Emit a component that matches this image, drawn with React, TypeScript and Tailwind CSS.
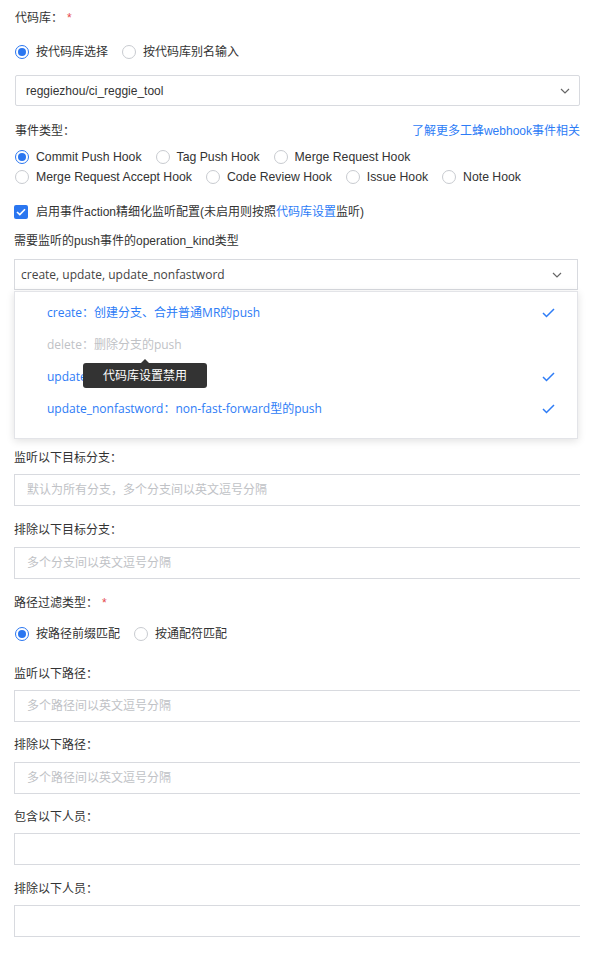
import React from 'react';

const BLUE = 'text-[#2d7cf6]';

function Label({ text, required, className = '' }: { text: string; required?: boolean; className?: string }) {
  return (
    <div className={`h-5 leading-5 text-[12px] text-[#333] ${className}`}>
      {text}
      {required && <span className="ml-[4px] text-[#e5484d]">*</span>}
    </div>
  );
}

function Radio({ label, checked, latin }: { label: string; checked?: boolean; latin?: boolean }) {
  return (
    <label className="flex items-center mr-[14px] h-5 cursor-pointer">
      <span
        className={`w-[14px] h-[14px] rounded-full border flex items-center justify-center bg-white ${
          checked ? 'border-[#2a76f0]' : 'border-[#c8cbd0]'
        }`}
      >
        {checked && <span className="w-2 h-2 rounded-full bg-[#2a76f0]" />}
      </span>
      <span className={`ml-[7px] text-[#333] whitespace-nowrap ${latin ? 'text-[12.25px]' : 'text-[12px]'}`}>{label}</span>
    </label>
  );
}

function Chevron({ className = '' }: { className?: string }) {
  return (
    <svg width="10" height="6" viewBox="0 0 10 6" className={className}>
      <path d="M1 1l4 4 4-4" fill="none" stroke="#666" strokeWidth="1.2" />
    </svg>
  );
}

function Check() {
  return (
    <svg width="13" height="10" viewBox="0 0 13 10">
      <path d="M1 5l3.5 3.5L12 1" fill="none" stroke="#2d7cf6" strokeWidth="1.5" />
    </svg>
  );
}

function TextInput({ placeholder, className = '' }: { placeholder?: string; className?: string }) {
  return (
    <input
      type="text"
      placeholder={placeholder}
      className={`block w-[566px] h-8 border border-r-0 border-[#d8dadf] px-3 text-[12px] text-[#333] placeholder:text-[#c0c2c6] outline-none ${className}`}
    />
  );
}

const kinds = [
  { key: 'create', desc: '创建分支、合并普通MR的push', checked: true },
  { key: 'delete', desc: '删除分支的push', disabled: true },
  { key: 'update', desc: '更新分支的push', checked: true },
  { key: 'update_nonfastword', desc: 'non-fast-forward型的push', checked: true },
];

export default function App() {
  return (
    <div className="w-[608px] min-h-[958px] bg-white px-[14px] pt-2 font-[family-name:'Liberation_Sans','Noto_Sans_CJK_SC',sans-serif]">
      <div className="w-[566px]">
        <Label text="代码库：" required className="ml-px" />

        <div className="flex mt-[14px] ml-px">
          <Radio label="按代码库选择" checked />
          <Radio label="按代码库别名输入" />
        </div>

        {/* repository select */}
        <div className="ml-px mt-[13px] w-[565px] h-[31px] border border-[#d8dadf] rounded-[2px] flex items-center justify-between pl-[10px] pr-[9px]">
          <span className="text-[12px] text-[#333]">reggiezhou/ci_reggie_tool</span>
          <Chevron />
        </div>

        <div className="flex items-center justify-between mt-[15px] ml-px">
          <Label text="事件类型：" />
          <a className={`text-[12px] ${BLUE} leading-5`}>了解更多工蜂webhook事件相关</a>
        </div>

        <div className="flex mt-[6px] ml-px">
          <Radio label="Commit Push Hook" checked latin />
          <Radio label="Tag Push Hook" latin />
          <Radio label="Merge Request Hook" latin />
        </div>
        <div className="flex ml-px">
          <Radio label="Merge Request Accept Hook" latin />
          <Radio label="Code Review Hook" latin />
          <Radio label="Issue Hook" latin />
          <Radio label="Note Hook" latin />
        </div>

        <div className="flex items-center mt-[15px] h-5">
          <span className="w-[14px] h-[14px] rounded-[2px] bg-[#2a76f0] flex items-center justify-center">
            <svg width="10" height="8" viewBox="0 0 10 8">
              <path d="M1 4l2.8 2.6L9 1.2" fill="none" stroke="#fff" strokeWidth="1.6" />
            </svg>
          </span>
          <span className="ml-2 text-[12px] text-[#333]">
            启用事件action精细化监听配置(未启用则按照<span className={BLUE}>代码库设置</span>监听)
          </span>
        </div>

        <Label text="需要监听的push事件的operation_kind类型" className="mt-[9px]" />

        {/* operation kind select */}
        <div className="relative mt-[8px] w-[564px]">
          <div className="h-[31px] border border-[#d8dadf] flex items-center justify-between pl-[6px] pr-[15px] bg-white">
            <span className="text-[12px] text-[#444] font-[family-name:'Open_Sans','Noto_Sans_CJK_SC',sans-serif]">
              create, update, update_nonfastword
            </span>
            <Chevron />
          </div>
          <div className="mt-px border border-[#e3e4e8] shadow-[0_2px_8px_rgba(0,0,0,0.12)] bg-white pt-[5px] pb-[13px]">
            {kinds.map(k => (
              <div key={k.key} className="h-8 flex items-center justify-between pl-[32px] pr-[22px]">
                <span
                  className={`text-[12px] font-[family-name:'Open_Sans','Noto_Sans_CJK_SC',sans-serif] ${
                    k.disabled ? 'text-[#c0c2c6]' : BLUE
                  }`}
                >
                  {k.key}：{k.desc}
                </span>
                {k.checked && <Check />}
              </div>
            ))}
          </div>

          {/* tooltip */}
          <div className="absolute left-[69px] top-[104px] h-[25px] w-[124px] rounded-[3px] bg-[#333] flex items-center pl-5 text-[12px] text-white">
            <span className="absolute -top-[4px] left-[58px] w-0 h-0 border-l-[4px] border-r-[4px] border-b-[4px] border-l-transparent border-r-transparent border-b-[#333]" />
            代码库设置禁用
          </div>
        </div>

        <Label text="监听以下目标分支：" className="mt-[9px]" />
        <TextInput placeholder="默认为所有分支，多个分支间以英文逗号分隔" className="mt-[6px]" />

        <Label text="排除以下目标分支：" className="mt-[14px]" />
        <TextInput placeholder="多个分支间以英文逗号分隔" className="mt-[7px]" />

        <Label text="路径过滤类型：" required className="mt-[14px]" />
        <div className="flex mt-[11px] ml-px">
          <Radio label="按路径前缀匹配" checked />
          <Radio label="按通配符匹配" />
        </div>

        <Label text="监听以下路径：" className="mt-5" />
        <TextInput placeholder="多个路径间以英文逗号分隔" className="mt-[6px]" />

        <Label text="排除以下路径：" className="mt-[13px]" />
        <TextInput placeholder="多个路径间以英文逗号分隔" className="mt-[7px]" />

        <Label text="包含以下人员：" className="mt-[13px]" />
        <TextInput className="mt-[6px]" />

        <Label text="排除以下人员：" className="mt-[14px]" />
        <TextInput className="mt-[6px]" />
      </div>
    </div>
  );
}
